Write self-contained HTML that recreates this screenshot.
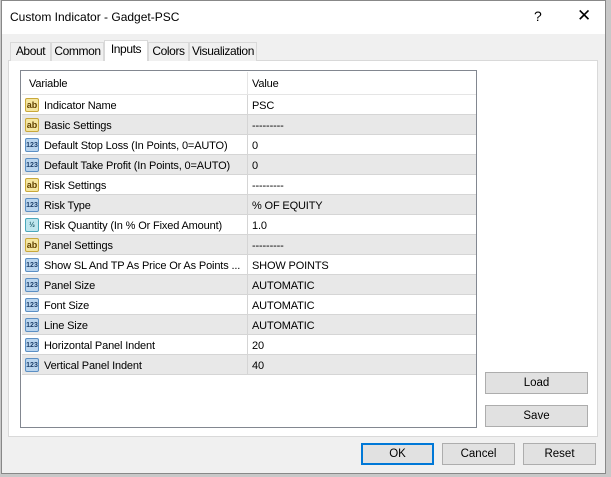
<!DOCTYPE html>
<html><head><style>
*{margin:0;padding:0;box-sizing:border-box}
body{width:611px;height:477px;background:#c8c8c8;position:relative;overflow:hidden;font-family:"Liberation Sans",sans-serif;font-size:11px;color:#000}
.a{position:absolute}
.win{left:1px;top:0;width:605px;height:474px;background:#f0f0f0;border:1px solid #888}
.title{left:2px;top:1px;width:603px;height:33px;background:#fff}
.tab{position:absolute;top:42px;height:19px;border:1px solid #d9d9d9;border-bottom:none;background:#f0f0f0;font-size:12px;line-height:17px;text-align:center;letter-spacing:-0.4px}
.panel{left:8px;top:60px;width:590px;height:377px;background:#fff;border:1px solid #d9d9d9}
.tbl{left:20px;top:70px;width:457px;height:358px;border:1px solid #828790;background:#fff}
.row{position:absolute;left:1px;width:454px;height:20px;border-bottom:1px solid #d5d5d5;line-height:22px;letter-spacing:-0.15px}
.row.g{background:#e8e8e8}
.row .n{position:absolute;left:22px;white-space:nowrap}
.row .v{position:absolute;left:230px}
.row .s{position:absolute;left:225px;top:0;width:1px;height:20px;background:#d5d5d5}
.ic{position:absolute;left:3px;top:3px;width:14px;height:14px;border-radius:2px;font-size:7px;font-weight:bold;line-height:13px;text-align:center;letter-spacing:0}
.ab{background:#f5e6a0;border:1px solid #c9a83a;color:#604000;font-size:9px}
.nm{background:#b8d4ee;border:1px solid #5b8fc4;color:#1d3f6a}
.hf{background:#bfe6ee;border:1px solid #4aa7bb;color:#1d5c6a}
.btn{position:absolute;height:22px;background:#e1e1e1;border:1px solid #adadad;text-align:center;line-height:20px;font-size:11.5px}
</style></head><body>
<div class="a win"></div>
<div class="a title"></div>
<div class="a" style="left:10px;top:10px;font-size:12px">Custom Indicator - Gadget-PSC</div>
<div class="a" style="left:534px;top:8px;font-size:14px">?</div>
<div class="a" style="left:577px;top:6px;font-size:17px;font-weight:300">✕</div>
<div class="a panel"></div>
<div class="tab" style="left:10px;width:41px">About</div>
<div class="tab" style="left:51px;width:53px">Common</div>
<div class="tab" style="left:104px;width:44px;top:40px;height:21px;background:#fff;line-height:17px">Inputs</div>
<div class="tab" style="left:148px;width:41px">Colors</div>
<div class="tab" style="left:189px;width:68px">Visualization</div>
<div class="a tbl">
<div class="row" style="top:1px;height:23px;line-height:24px;border-bottom:1px solid #e5e5e5"><span class="n" style="left:7px">Variable</span><span class="v">Value</span><span class="s" style="height:23px;background:#e5e5e5"></span></div>
<div class="row" style="top:24px"><span class="ic ab">ab</span><span class="n">Indicator Name</span><span class="s"></span><span class="v">PSC</span></div>
<div class="row g" style="top:44px"><span class="ic ab">ab</span><span class="n">Basic Settings</span><span class="s"></span><span class="v">---------</span></div>
<div class="row" style="top:64px"><span class="ic nm">123</span><span class="n">Default Stop Loss (In Points, 0=AUTO)</span><span class="s"></span><span class="v">0</span></div>
<div class="row g" style="top:84px"><span class="ic nm">123</span><span class="n">Default Take Profit (In Points, 0=AUTO)</span><span class="s"></span><span class="v">0</span></div>
<div class="row" style="top:104px"><span class="ic ab">ab</span><span class="n">Risk Settings</span><span class="s"></span><span class="v">---------</span></div>
<div class="row g" style="top:124px"><span class="ic nm">123</span><span class="n">Risk Type</span><span class="s"></span><span class="v">% OF EQUITY</span></div>
<div class="row" style="top:144px"><span class="ic hf">½</span><span class="n">Risk Quantity (In % Or Fixed Amount)</span><span class="s"></span><span class="v">1.0</span></div>
<div class="row g" style="top:164px"><span class="ic ab">ab</span><span class="n">Panel Settings</span><span class="s"></span><span class="v">---------</span></div>
<div class="row" style="top:184px"><span class="ic nm">123</span><span class="n">Show SL And TP As Price Or As Points ...</span><span class="s"></span><span class="v">SHOW POINTS</span></div>
<div class="row g" style="top:204px"><span class="ic nm">123</span><span class="n">Panel Size</span><span class="s"></span><span class="v">AUTOMATIC</span></div>
<div class="row" style="top:224px"><span class="ic nm">123</span><span class="n">Font Size</span><span class="s"></span><span class="v">AUTOMATIC</span></div>
<div class="row g" style="top:244px"><span class="ic nm">123</span><span class="n">Line Size</span><span class="s"></span><span class="v">AUTOMATIC</span></div>
<div class="row" style="top:264px"><span class="ic nm">123</span><span class="n">Horizontal Panel Indent</span><span class="s"></span><span class="v">20</span></div>
<div class="row g" style="top:284px"><span class="ic nm">123</span><span class="n">Vertical Panel Indent</span><span class="s"></span><span class="v">40</span></div>
</div>
<div class="btn" style="left:485px;top:372px;width:103px">Load</div>
<div class="btn" style="left:485px;top:405px;width:103px">Save</div>
<div class="btn" style="left:361px;top:443px;width:73px;border:2px solid #0078d7;line-height:18px">OK</div>
<div class="btn" style="left:442px;top:443px;width:73px">Cancel</div>
<div class="btn" style="left:523px;top:443px;width:73px">Reset</div>
</body></html>
